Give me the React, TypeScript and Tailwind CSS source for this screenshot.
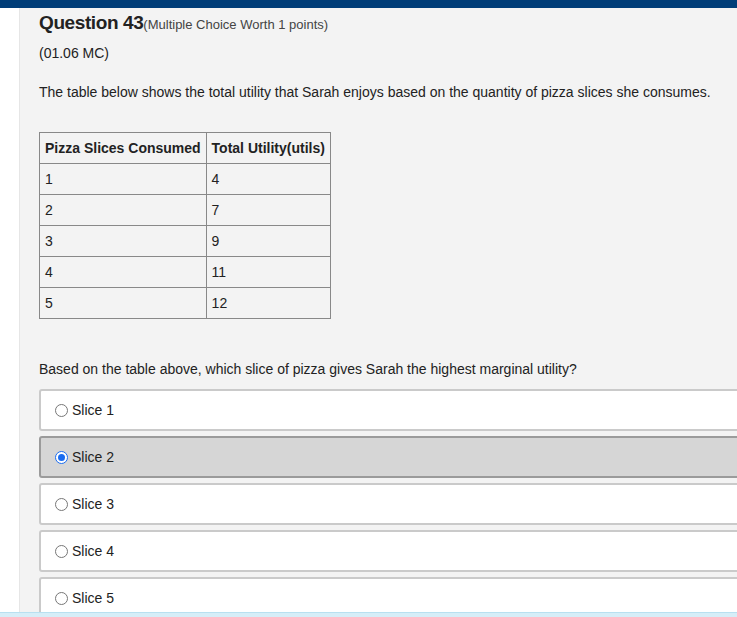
import { useState } from "react";

const rows = [
  [1, 4],
  [2, 7],
  [3, 9],
  [4, 11],
  [5, 12],
];

const options = ["Slice 1", "Slice 2", "Slice 3", "Slice 4", "Slice 5"];

export default function App() {
  const [picked, setPicked] = useState(1);

  return (
    <div
      className="relative h-[617px] w-[737px] overflow-hidden bg-white text-[#222]"
      style={{ fontFamily: '"Liberation Sans", Arial, sans-serif' }}
    >
      {/* top bar */}
      <div className="h-2 w-full bg-[#003d78]" />

      <div className="ml-[19px] min-h-[609px] border-l border-[#e6e6e6] bg-[#f3f3f3] pl-[19px]">
        <div className="flex items-baseline pt-[5px] leading-[20px]">
          <span className="text-[19px] font-bold tracking-[-0.4px] text-[#222]">Question 43</span>
          <span className="text-[13px] text-[#444]">(Multiple Choice Worth 1 points)</span>
        </div>

        <p className="mt-[10px] text-[14px] leading-[16px]">(01.06 MC)</p>

        <p className="mt-[23px] text-[14px] leading-[16px]">
          The table below shows the total utility that Sarah enjoys based on the quantity of pizza slices she
          consumes.
        </p>

        <table className="mt-[32px] border-collapse border border-[#888] text-[14px]">
          <thead>
            <tr className="h-[31px]">
              <th className="border border-[#888] px-[5px] text-left font-bold">Pizza Slices Consumed</th>
              <th className="border border-[#888] px-[5px] text-left font-bold">Total Utility(utils)</th>
            </tr>
          </thead>
          <tbody>
            {rows.map(([a, b]) => (
              <tr key={a} className="h-[31px]">
                <td className="border border-[#888] px-[5px]">{a}</td>
                <td className="border border-[#888] px-[5px]">{b}</td>
              </tr>
            ))}
          </tbody>
        </table>

        <p className="mt-[42px] text-[14px] leading-[16px]">
          Based on the table above, which slice of pizza gives Sarah the highest marginal utility?
        </p>

        <div className="mt-[12px] -mr-3 flex flex-col gap-[5px]">
          {options.map((opt, i) => {
            const on = i === picked;
            return (
              <label
                key={opt}
                onClick={() => setPicked(i)}
                className={
                  "flex h-[42px] cursor-pointer items-center rounded-[3px] border-2 pl-[14px] text-[14px] " +
                  (on ? "border-[#9b9b9b] bg-[#d6d6d6]" : "border-[#cacaca] bg-white")
                }
              >
                <span
                  className={
                    "mr-[4px] flex h-[13px] w-[13px] items-center justify-center rounded-full border " +
                    (on ? "border-[#1a6cf0] bg-white" : "border-[#777] bg-white")
                  }
                >
                  {on && <span className="h-[7px] w-[7px] rounded-full bg-[#1a6cf0]" />}
                </span>
                <span>{opt}</span>
              </label>
            );
          })}
        </div>
      </div>

      {/* bottom strip */}
      <div className="absolute bottom-0 left-0 h-[5px] w-full border-t border-[#b8e0f0] bg-[#d6eef8]" />
    </div>
  );
}
